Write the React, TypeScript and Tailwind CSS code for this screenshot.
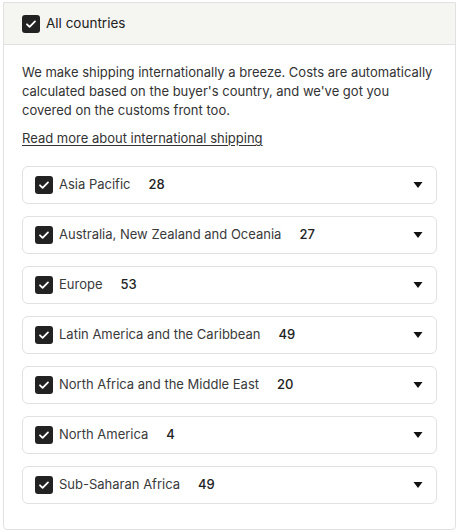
import React from "react";

const regions: [string, number][] = [
  ["Asia Pacific", 28],
  ["Australia, New Zealand and Oceania", 27],
  ["Europe", 53],
  ["Latin America and the Caribbean", 49],
  ["North Africa and the Middle East", 20],
  ["North America", 4],
  ["Sub-Saharan Africa", 49],
];

function Check() {
  return (
    <span className="flex h-[18px] w-[18px] shrink-0 items-center justify-center rounded-[3px] bg-[#222222]">
      <svg width="12" height="12" viewBox="0 0 12 12" fill="none">
        <path d="M2 6.3l2.6 2.6L10 3.4" stroke="#fff" strokeWidth="1.8" strokeLinecap="round" strokeLinejoin="round" />
      </svg>
    </span>
  );
}

export default function App() {
  return (
    <div className="min-h-[532px] w-[460px] bg-white pl-[3px] pt-[2px] font-['Inter',sans-serif] text-[#222222]">
      <div className="w-[453px] rounded-b-[4px] border border-[#e1e1e1]">
        <div className="flex h-[42px] items-center gap-[6px] border-b border-[#e1e1e1] bg-[#f5f5f1] pl-[18px] text-[13.5px]">
          <Check />
          <span>All countries</span>
        </div>
        <div className="px-[18px] pb-[25px] pt-[18px]">
          <p className="text-[13px] leading-[19px] text-[#333333]">
            We make shipping internationally a breeze. Costs are automatically calculated based on the buyer's country, and we've got you covered on the customs front too.
          </p>
          <p className="mt-[9px] text-[13px] leading-[19px] text-[#333333] underline underline-offset-2">
            Read more about international shipping
          </p>
          <div className="mt-[18px] flex flex-col gap-[12px]">
            {regions.map(([name, n]) => (
              <div
                key={name}
                className="flex h-[38px] items-center rounded-[6px] border border-[#e1e1e1] pl-[12px] pr-[13px] text-[13px]"
              >
                <Check />
                <span className="ml-[6px] text-[#3a3a3a]">{name}</span>
                <span className="ml-[18px] font-medium">{n}</span>
                <svg className="ml-auto" width="10" height="8" viewBox="0 0 10 8">
                  <path d="M0.5 1h9L5 7z" fill="#111" />
                </svg>
              </div>
            ))}
          </div>
        </div>
      </div>
    </div>
  );
}
